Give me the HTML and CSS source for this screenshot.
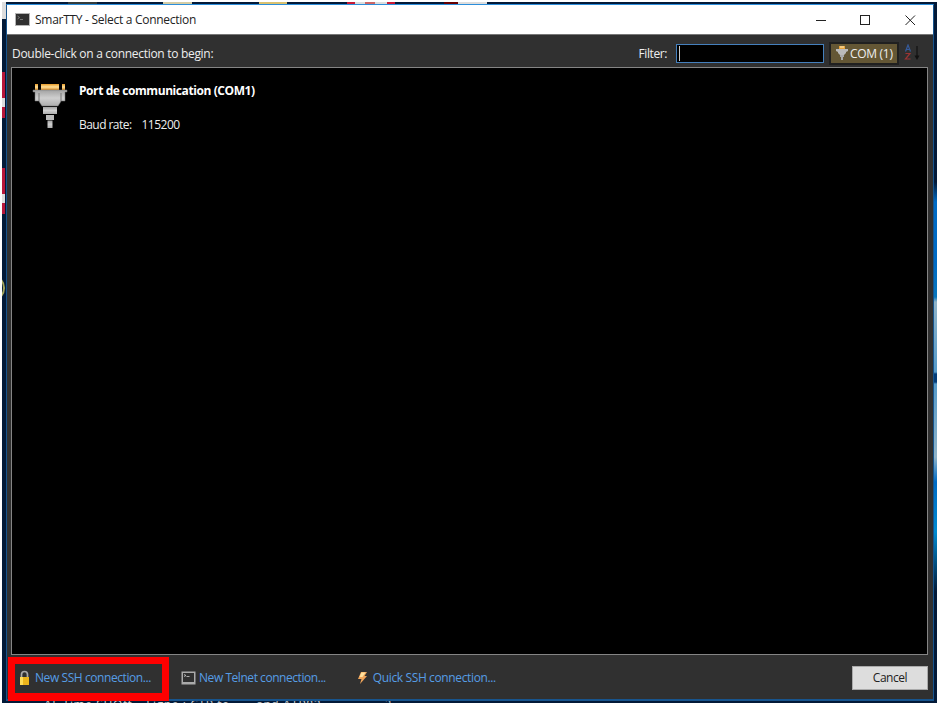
FILE: index.html
```html
<!DOCTYPE html>
<html lang="en">
<head>
<meta charset="utf-8">
<title>SmarTTY - Select a Connection</title>
<link rel="stylesheet" href="styles.css">
</head>
<body>
<div class="desktop">
  <i class="scrap s1"></i><i class="scrap s2"></i><i class="scrap s3"></i><i class="scrap s4"></i><i class="scrap s5"></i>
  <i class="scrap l0"></i><i class="scrap l1"></i><i class="scrap l2"></i><i class="scrap l3"></i>
  <i class="scrap glow"></i>
  <div class="behind">AL Time SHOff – Ligne : CTP to ..... and ATP82 ..... ... ..-.. ?</div>
  <main class="window">
    <header class="titlebar">
      <svg class="app-icon" width="15" height="13" viewBox="0 0 15 13"><rect width="15" height="13" fill="#b5b5b5"/><rect x="1" y="1" width="13" height="11" fill="#303030"/><path d="M2.500 3l2 1.500-2 1.500M5 6.500h3" fill="none" stroke="#888" stroke-width=".8"/></svg>
      <h1><span class="t-title">SmarTTY - Select a Connection</span></h1>
      <svg class="controls" width="110" height="12" viewBox="0 0 110 12" fill="none" stroke="#222" stroke-width="1"><path d="M1 6.500h10"/><rect x="45.500" y="1.500" width="9" height="9"/><path d="M90.500 1.500l9.500 9.500M100 1.500l-9.500 9.500"/></svg>
    </header>
    <div class="toolbar">
      <span class="hint t-hint">Double-click on a connection to begin:</span>
      <label class="filter t-filter">Filter:</label>
      <div class="field"><i></i></div>
      <div class="com"><svg width="14" height="16" viewBox="0 0 14 16"><path d="M4 1h6v3H4z" fill="#e9a33c"/><path d="M5 1.500h4v1H5z" fill="#fff0c0"/><path d="M1 4h12v2l-2 1v1L9 10H5L3 8V7L1 6z" fill="#bbb"/><path d="M5 10h4v2H8v3H6v-3H5z" fill="#aaa"/></svg><span class="t-com">COM (1)</span></div>
      <svg class="sort" width="18" height="18" viewBox="0 0 18 18" fill="none"><path d="M1.500 7.500l2.500-6.500 2.500 6.500M2.300 5.500h3.400" stroke="#365b9b" stroke-width="1.200"/><path d="M1.500 9.500h4.500l-4.500 5.500h5" stroke="#9b3434" stroke-width="1.200"/><path d="M13 2v11" stroke="#111" stroke-width="1.200"/><path d="M10.500 11.500h5L13 16z" fill="#111"/></svg>
    </div>
    <section class="list">
      <article class="item">
        <svg class="plug" width="36" height="48" viewBox="0 0 36 48">
          <defs>
            <linearGradient id="m" x2="0" y2="1"><stop stop-color="#a2a2a2"/><stop offset=".5" stop-color="#cfcfcf"/><stop offset="1" stop-color="#adadad"/></linearGradient>
            <linearGradient id="g" x2="0" y2="1"><stop stop-color="#e69a28"/><stop offset=".5" stop-color="#ffdf98"/><stop offset="1" stop-color="#d98a20"/></linearGradient>
          </defs>
          <path d="M3 1h3v6H3zM9 1h18v6H9zM30 1h3v6h-3z" fill="url(#g)"/>
          <path d="M1 7h34v2h-2v9h-4l-1 2-2 3H10l-2-3-1-2H3V9H1z" fill="url(#m)" stroke="#777" stroke-width=".5"/>
          <path d="M7 10v8M29 10v8" stroke="#777" fill="none"/>
          <path d="M11 24h14v7H11z" fill="url(#m)"/><path d="M14 32h8v5h-8z" fill="#bbb"/><path d="M15.500 37.500h5v7.500h-5z" fill="url(#m)"/>
        </svg>
        <div class="info"><h2><span class="t-port">Port de communication (COM1)</span></h2><p><span class="t-baud">Baud rate:</span><span class="t-rate">115200</span></p></div>
      </article>
    </section>
    <footer class="footer">
      <a class="link ssh"><svg width="11" height="16" viewBox="0 0 11 16"><path d="M2.500 8V4.500a3 3 0 0 1 6 0V8" fill="none" stroke="#a8a8a8" stroke-width="1.700"/><path d="M1 7h9v8H1z" fill="#edb51c"/><path d="M1 7h3v8H1z" fill="#ffdc55"/></svg><span class="t-ssh">New SSH connection...</span></a>
      <a class="link telnet"><svg width="15" height="14" viewBox="0 0 15 14"><rect x=".5" y=".5" width="14" height="13" fill="#aaa"/><rect x="2" y="2" width="11" height="9" fill="#303030"/><path d="M3 3.500l2 1-2 1M5.500 5.500h3" stroke="#ccc" fill="none" stroke-width=".8"/></svg><span class="t-telnet">New Telnet connection...</span></a>
      <a class="link quick"><svg width="11" height="14" viewBox="0 0 11 14"><path d="M4 1h6L7.500 5H10l-7 8 1.500-5H1z" fill="#f0a55a"/><path d="M4.500 1.500h4L5.500 6H2.500z" fill="#ffe2a0"/></svg><span class="t-quick">Quick SSH connection...</span></a>
      <button class="cancel"><span class="t-cancel">Cancel</span></button>
    </footer>
  </main>
  <div class="highlight"></div>
</div>
</body>
</html>
```
FILE: styles.css
```css
* { box-sizing: border-box; }
body { margin: 0; width: 939px; height: 703px; overflow: hidden; background: #fff; font: 12px/16px "Open Sans", "Noto Sans", sans-serif; }
h1, h2, p { margin: 0; font: inherit; }
.desktop { position: relative; margin: 2px 2px 0; width: 935px; height: 701px; padding: 2px 3px 2px 4px; background: #031a38; overflow: hidden; }
.window { position: relative; width: 928px; height: 697px; border: 1px solid #17548d; border-top-color: #2c8edb; border-bottom-width: 2px; background: #303030; display: flex; flex-direction: column; }
.titlebar { height: 29px; background: #fff; color: #222; display: flex; align-items: center; padding: 0 18px 0 8px; flex: none; }
.titlebar h1 { margin-left: 5px; flex: 1; }
.controls { margin-right: -10px; }
.toolbar { height: 33px; border-top: 1px solid #777; display: flex; align-items: center; padding: 4px 11px 0 5px; color: #eee; flex: none; }
.hint { margin-right: auto; padding-top: 2px; }
.filter { margin-right: 9px; padding-top: 2px; }
.field { width: 148px; height: 19px; border: 1px solid #4580bd; background: #000; padding: 1px 2px; }
.field i { display: block; width: 1px; height: 15px; background: #ccc; }
.com { margin-left: 5px; width: 70px; height: 23px; border: 2px solid #202020; background: #645735; display: flex; align-items: center; padding-left: 4px; }
.com span { margin-left: 1px; padding-top: 1px; white-space: nowrap; }
.sort { margin-left: 5px; }
.list { margin: 0 5px 0 4px; height: 588px; border: 1px solid #858585; background: #000; color: #eee; padding: 15px 21px; flex: none; }
.item { display: flex; }
.plug { margin-left: -1px; }
.info { margin-left: 11px; }
.info h2 { font-weight: 700; color: #fff; }
.info p { margin-top: 18px; display: flex; gap: 10px; }
.footer { flex: 1; display: flex; align-items: center; padding: 2px 5px 0 12px; color: #569de5; }
.link { display: flex; align-items: center; gap: 5px; }
.telnet { margin-left: 30px; gap: 3px; }
.quick { margin-left: 31px; }
.cancel { margin-left: auto; width: 76px; height: 24px; border: 1px solid #aaa; background: #ddd; color: #222; font: inherit; padding: 0; }
.t-title { letter-spacing: -.28px; }
.t-hint { letter-spacing: -.3px; }
.t-filter { letter-spacing: -.4px; }
.t-com { letter-spacing: -.3px; }
.t-port { letter-spacing: -.42px; }
.t-baud { letter-spacing: -.55px; }
.t-rate { letter-spacing: -.5px; }
.t-ssh { letter-spacing: -.42px; }
.t-telnet { letter-spacing: -.45px; }
.t-quick { letter-spacing: -.37px; }
.t-cancel { letter-spacing: -.45px; }
.highlight { position: absolute; left: 6px; top: 655px; width: 161px; height: 44px; border: 7px solid #f00; border-bottom-width: 8px; }
.behind { position: absolute; left: 42px; top: 695px; color: #ccc; white-space: nowrap; font-size: 12px; letter-spacing: .6px; }
.scrap { position: absolute; }
.s1 { left: 66px; top: 0; width: 29px; height: 2px; background: #333c3c; }
.s2 { left: 161px; top: 0; width: 29px; height: 2px; background: #d5cda5; }
.s3 { left: 257px; top: 0; width: 28px; height: 2px; background: #dac170; }
.s4 { left: 345px; top: 0; width: 48px; height: 2px; background: linear-gradient(90deg, #c81a35 8px, #ddd 8px 18px, #c66 18px 28px, #ddd 28px 40px, #c81a35 40px); }
.s5 { left: 442px; top: 0; width: 43px; height: 2px; background: linear-gradient(90deg, #600 14px, #ddd 14px); }
.l0 { left: 0; top: 0; width: 4px; height: 17px; background: #ddd; }
.l1 { left: 0; top: 70px; width: 3px; height: 46px; background: linear-gradient(#b7173a 26px, #ddd 26px 35px, #b7173a 35px); }
.l2 { left: 0; top: 166px; width: 3px; height: 46px; background: linear-gradient(#b7173a 26px, #ddd 26px 35px, #b7173a 35px); }
.l3 { left: -17px; top: 274px; width: 20px; height: 24px; border: 2px solid #a4a65b; border-radius: 50%; }
.glow { right: 0; top: 180px; width: 3px; height: 410px; background: linear-gradient(#031a38, #006bc5 20px 80px, #0877bd 115px, #91b4c8 120px, #579bc9 190px, #033c78 192px 200px, #579bc9 202px, #91b4c8 275px, #006bc5 300px, #008bd0 350px, #031a38); }
```
